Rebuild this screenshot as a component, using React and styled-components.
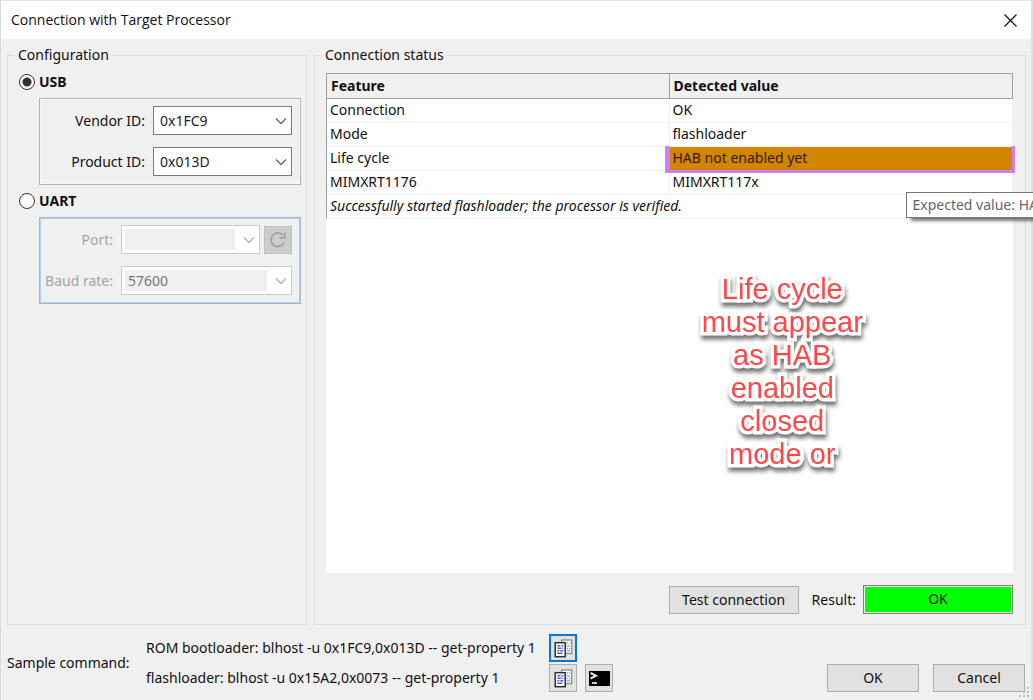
import React, { useState } from 'react'
import styled, { createGlobalStyle, css } from 'styled-components'

const features = [
  { name: "Connection", value: "OK" },
  { name: "Mode", value: "flashloader" },
  { name: "Life cycle", value: "HAB not enabled yet", warning: true, hint: "Expected value: HA" },
  { name: "MIMXRT1176", value: "MIMXRT117x" },
]

const noteLines = ["Life cycle", "must appear", "as HAB", "enabled", "closed", "mode or"]

function Chevron() {
  return (
    <ChevronIcon viewBox="0 0 12 8" aria-hidden="true">
      <path d="M1 1.5 L6 6.5 L11 1.5" fill="none" stroke="currentColor" strokeWidth="1.3" />
    </ChevronIcon>
  )
}

function Combo({ id, value, options, disabled, wide, onChange }) {
  return (
    <ComboWrap $disabled={disabled} $wide={wide}>
      <Select id={id} value={value} disabled={disabled} onChange={(e) => onChange?.(e.target.value)}>
        {options.map((item) => (
          <option key={item} value={item}>{item}</option>
        ))}
      </Select>
      <Chevron />
    </ComboWrap>
  )
}

function CopyIcon() {
  return (
    <svg width="19" height="19" viewBox="0 0 19 19" aria-hidden="true">
      <rect x="7.7" y="1" width="10" height="13.5" fill="#fff" stroke="#8c8c8c" strokeWidth="1.3" />
      <path d="M12.5 4h1.5M15 4h1.5M12.5 7h3.5M12.5 9.5h1.5M15 9.5h1.5M12.5 12h3.5" stroke="#8fb0e8" strokeWidth="1.3" />
      <rect x="1.2" y="3.7" width="10" height="14" fill="#fff" stroke="#303030" strokeWidth="1.5" />
      <path d="M3.3 6.7h3M7.3 6.7h2M3.3 9.2h4M8.3 9.2h1M3.3 11.7h2M6.3 11.7h3M3.3 14.2h5" stroke="#5a5ae0" strokeWidth="1.4" />
    </svg>
  )
}

function TerminalIcon() {
  return (
    <svg width="21" height="15" viewBox="0 0 21 15" aria-hidden="true">
      <rect width="21" height="15" fill="#000" />
      <path d="M1.5 2 L7 4.7 L1.5 7.5" fill="none" stroke="#e4e4e4" strokeWidth="2" />
      <path d="M3 12h5" stroke="#e4e4e4" strokeWidth="1.8" />
    </svg>
  )
}

function RefreshIcon() {
  return (
    <svg width="18" height="18" viewBox="0 0 18 18" aria-hidden="true">
      <path d="M15.2 11.2A6.8 6.8 0 1 1 14 4.4" fill="none" stroke="#a2a2a2" strokeWidth="1.8" />
      <path d="M15.8 1.5v5.3h-5.3" fill="none" stroke="#a2a2a2" strokeWidth="1.8" />
    </svg>
  )
}

function App() {
  const [mode, setMode] = useState("usb")
  const [vendor, setVendor] = useState("0x1FC9")
  const [product, setProduct] = useState("0x013D")

  return (
    <Dialog>
      <GlobalStyle />
      <TitleBar>
        <Title>Connection with Target Processor</Title>
        <CloseButton aria-label="Close">
          <svg width="13" height="13" viewBox="0 0 13 13" aria-hidden="true">
            <path d="M.5 .5l12 12M12.5 .5l-12 12" stroke="#111" strokeWidth="1.2" />
          </svg>
        </CloseButton>
      </TitleBar>

      <Panels>
        <Configuration>
          <Legend>Configuration</Legend>
          <RadioRow>
            <Radio type="radio" name="mode" checked={mode === "usb"} onChange={() => setMode("usb")} />
            USB
          </RadioRow>
          <Group>
            <Field>
              <Label htmlFor="vendor">Vendor ID:</Label>
              <Combo id="vendor" value={vendor} options={["0x1FC9"]} onChange={setVendor} />
            </Field>
            <Field>
              <Label htmlFor="product">Product ID:</Label>
              <Combo id="product" value={product} options={["0x013D"]} onChange={setProduct} />
            </Field>
          </Group>
          <RadioRow>
            <Radio type="radio" name="mode" checked={mode === "uart"} onChange={() => setMode("uart")} />
            UART
          </RadioRow>
          <Group $uart>
            <Field $uart>
              <Label htmlFor="port">Port:</Label>
              <Combo id="port" value="" options={[""]} disabled={mode === "usb"} />
              <RefreshButton aria-label="Refresh ports" disabled={mode === "usb"}>
                <RefreshIcon />
              </RefreshButton>
            </Field>
            <Field $uart>
              <Label htmlFor="baud">Baud rate:</Label>
              <Combo id="baud" value="57600" options={["57600"]} disabled={mode === "usb"} wide />
            </Field>
          </Group>
        </Configuration>

        <Status>
          <Legend>Connection status</Legend>
          <TableArea>
            <Table>
              <thead>
                <tr>
                  <Th>Feature</Th>
                  <Th>Detected value</Th>
                </tr>
              </thead>
              <tbody>
                {features.map((item) => (
                  <tr key={item.name}>
                    <Td>{item.name}</Td>
                    <Td $warning={item.warning}>
                      {item.value}
                      {item.warning && <Marker />}
                      {item.hint && <Tooltip role="tooltip">{item.hint}</Tooltip>}
                    </Td>
                  </tr>
                ))}
                <tr>
                  <Td colSpan={2} $message>Successfully started flashloader; the processor is verified.</Td>
                </tr>
              </tbody>
            </Table>
            <Note>
              {noteLines.map((line) => (
                <NoteLine key={line}>{line}</NoteLine>
              ))}
            </Note>
          </TableArea>
          <ResultRow>
            <Button $wide>Test connection</Button>
            <ResultLabel htmlFor="result">Result:</ResultLabel>
            <Result id="result">OK</Result>
          </ResultRow>
        </Status>
      </Panels>

      <Footer>
        <FooterLabel>Sample command:</FooterLabel>
        <Commands>
          <span>ROM bootloader: blhost -u 0x1FC9,0x013D -- get-property 1</span>
          <IconButton $focused aria-label="Copy ROM bootloader command"><CopyIcon /></IconButton>
          <span />
          <span>flashloader: blhost -u 0x15A2,0x0073 -- get-property 1</span>
          <IconButton aria-label="Copy flashloader command"><CopyIcon /></IconButton>
          <IconButton aria-label="Open terminal"><TerminalIcon /></IconButton>
        </Commands>
        <Actions>
          <Button>OK</Button>
          <Button>Cancel</Button>
        </Actions>
        <Grip viewBox="0 0 12 12" aria-hidden="true">
          <path d="M8 0h2v2h-2zM4 4h2v2h-2zM8 4h2v2h-2zM0 8h2v2h-2zM4 8h2v2h-2zM8 8h2v2h-2z" fill="#bdbdbd" />
        </Grip>
      </Footer>
    </Dialog>
  )
}

export default App

const GlobalStyle = createGlobalStyle`
  * {
    box-sizing: border-box;
  }

  body {
    margin: 0;
    background: #f0f0f0;
    color: #111;
    font-family: "Noto Sans", "Open Sans", sans-serif;
    font-size: 14px;
    line-height: 20px;
  }

  button, select {
    color: inherit;
    font: inherit;
  }
`

const Dialog = styled.main`
  display: flex;
  flex-direction: column;
  min-height: 100vh;
  overflow: hidden;
  padding-right: 2px;
  border-left: 1px solid #d9d9d9;
  background: linear-gradient(#e0e0e0, #e0e0e0) no-repeat right / 2px 100%;
`

const TitleBar = styled.header`
  display: flex;
  align-items: center;
  justify-content: space-between;
  height: 39px;
  padding: 0 10px;
  border-top: 1px solid #e4e4e4;
  background: #fff;
`

const Title = styled.h1`
  margin: 0;
  font-family: "Open Sans", "Noto Sans", sans-serif;
  font-size: 14px;
  font-weight: 400;
`

const CloseButton = styled.button`
  display: flex;
  align-items: center;
  justify-content: center;
  width: 21px;
  height: 24px;
  padding: 0;
  border: 0;
  background: transparent;
`

const Panels = styled.div`
  display: grid;
  grid-template-columns: 300px minmax(0, 1fr);
  gap: 7px;
  flex: 1;
  padding: 6px 5px 0 6px;
`

const panel = css`
  display: flex;
  flex-direction: column;
  min-width: 0;
  margin: 0;
  border: 1px solid #dcdcdc;
`

const Configuration = styled.fieldset`
  ${panel}
  padding: 6px 5px 0 11px;
`

const Status = styled.fieldset`
  ${panel}
  padding: 8px 12px 10px 11px;
`

const Legend = styled.legend`
  margin-left: -4px;
  padding: 0 3px;
`

const RadioRow = styled.label`
  display: flex;
  align-items: center;
  gap: 4px;
  height: 22px;
  font-weight: 700;
`

const Radio = styled.input`
  appearance: none;
  width: 16px;
  height: 16px;
  margin: 0;
  border: 1px solid #333;
  border-radius: 50%;
  background: #fff;

  &:checked {
    background: radial-gradient(circle, #333 4px, #fff 5px);
  }
`

const Group = styled.div`
  display: flex;
  flex-direction: column;
  gap: 12px;
  margin: 5px 0 5px 20px;
  padding: 7px 8px 8px 7px;
  border: 1px solid ${(props) => (props.$uart ? "#a9b5c8" : "#b4b4bc")};
  box-shadow: ${(props) => (props.$uart ? "inset 0 0 0 1px #b3cfee" : "inset 0 0 0 1px #f7f7fa")};
`

const Field = styled.div`
  display: grid;
  grid-template-columns: ${(props) => (props.$uart ? "70px minmax(0, 1fr) 28px" : "102px minmax(0, 1fr)")};
  align-items: center;
  column-gap: 4px;
  color: ${(props) => (props.$uart ? "#a5a5a5" : "inherit")};
`

const Label = styled.label`
  justify-self: end;
  padding-right: 4px;
  white-space: nowrap;
`

const ComboWrap = styled.div`
  position: relative;
  grid-column: ${(props) => (props.$wide ? "2 / -1" : "auto")};
  color: ${(props) => (props.$disabled ? "#b0b0b0" : "#666")};
`

const Select = styled.select`
  display: block;
  appearance: none;
  width: 100%;
  height: 29px;
  padding: 0 24px 0 6px;
  border: 1px solid #7a7a7a;
  border-radius: 0;
  background: #fff;
  color: #222;

  &:disabled {
    border-color: #ccc;
    background: #fff linear-gradient(#f0f0f0, #f0f0f0) no-repeat 3px 3px / calc(100% - 27px) calc(100% - 6px);
    color: #777;
    opacity: 1;
  }
`

const ChevronIcon = styled.svg`
  position: absolute;
  top: 11px;
  right: 5px;
  width: 12px;
  height: 8px;
  pointer-events: none;
`

const RefreshButton = styled.button`
  display: flex;
  align-items: center;
  justify-content: center;
  width: 28px;
  height: 28px;
  padding: 0;
  border: 1px solid #c0c0c0;
  background: #ccc;
`

const TableArea = styled.div`
  position: relative;
  flex: 1;
  background: #fff;
`

const Table = styled.table`
  width: 100%;
  border-collapse: separate;
  border-spacing: 0;
  table-layout: fixed;
`

const Th = styled.th`
  height: 26px;
  padding: 0 4px;
  border: 1px solid #a0a0a0;
  background: #f0f0f0;
  text-align: left;

  & + & {
    border-left: 0;
  }
`

const Td = styled.td`
  position: relative;
  height: 24px;
  padding: 0 3px 2px;
  border-right: 1px solid #f0f0f0;
  border-bottom: 1px solid ${(props) => (props.$warning ? "#d48500" : "#f0f0f0")};
  background: ${(props) => (props.$warning ? "#d48500" : "#fff")};
  color: ${(props) => (props.$warning ? "#2d1c00" : "inherit")};
  font-style: ${(props) => (props.$message ? "italic" : "normal")};
  white-space: nowrap;

  &:first-child {
    border-left: 1px solid #a0a0a0;
  }
`

const Marker = styled.span`
  position: absolute;
  z-index: 1;
  inset: -1px -3px -3px -5px;
  border: solid #cc80ff;
  border-width: 0 3px 3px 5px;
`

const Tooltip = styled.span`
  position: absolute;
  z-index: 2;
  top: 45px;
  left: 236px;
  width: 180px;
  padding: 2px 6px;
  border: 1px solid #767676;
  background: #fff;
  box-shadow: 4px 4px 3px -1px rgba(0, 0, 0, 0.5);
  color: #666;
`

const Note = styled.p`
  position: absolute;
  top: 200px;
  left: 67%;
  width: 180px;
  margin: 0 0 0 -94px;
  color: #ff4747;
  font-family: "Liberation Sans", Arial, sans-serif;
  font-size: 29px;
  line-height: 33px;
  text-align: center;
  -webkit-text-stroke: 7px #fff;
  paint-order: stroke fill;
  filter: drop-shadow(1px 4px 2px rgba(0, 0, 0, 0.55));
`

const NoteLine = styled.span`
  display: block;
`

const ResultRow = styled.div`
  display: flex;
  align-items: center;
  justify-content: flex-end;
  padding-top: 12px;
`

const Button = styled.button`
  width: ${(props) => (props.$wide ? "130px" : "92px")};
  height: 28px;
  padding: 0;
  border: 1px solid #adadad;
  background: #e1e1e1;
`

const ResultLabel = styled.label`
  margin: 0 7px 0 13px;
`

const Result = styled.output`
  width: 150px;
  height: 29px;
  padding: 3px;
  border: 1px solid #808080;
  background: #00ff00;
  box-shadow: inset 0 0 0 1px #f0f0f0;
  text-align: center;
`

const Footer = styled.footer`
  position: relative;
  display: flex;
  align-items: center;
  padding: 9px 6px 8px;
`

const FooterLabel = styled.span`
  width: 139px;
`

const Commands = styled.div`
  display: grid;
  grid-template-columns: 395px 28px 28px;
  align-items: center;
  gap: 2px 8px;
  white-space: nowrap;
`

const IconButton = styled.button`
  display: flex;
  align-items: center;
  justify-content: center;
  width: 28px;
  height: 28px;
  padding: 0;
  border: ${(props) => (props.$focused ? "2px solid #0078d7" : "1px solid #adadad")};
  background: #e1e1e1;
`

const Actions = styled.div`
  display: flex;
  align-self: flex-end;
  gap: 14px;
  margin-left: auto;
`

const Grip = styled.svg`
  position: absolute;
  right: 0;
  bottom: 1px;
  width: 12px;
  height: 12px;
`
